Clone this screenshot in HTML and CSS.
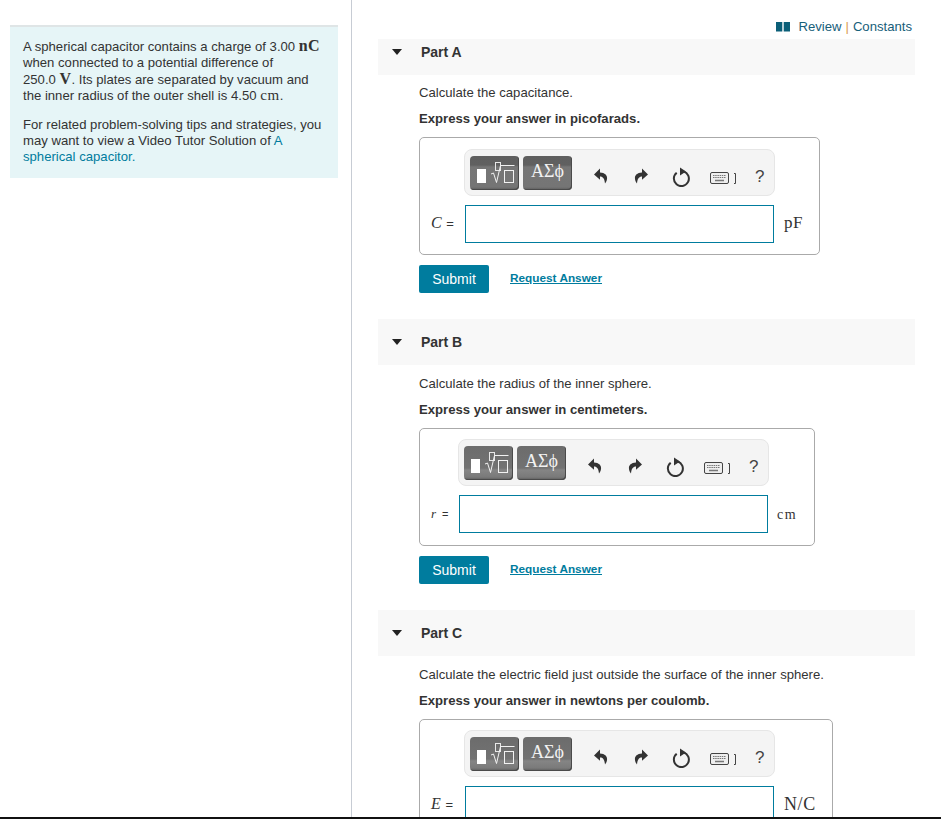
FILE: index.html
```
<!DOCTYPE html>
<html lang="en">
<head>
<meta charset="utf-8">
<title>Spherical capacitor</title>
<link rel="stylesheet" href="styles.css">
</head>
<body>
<svg class="sprites" width="0" height="0" aria-hidden="true">
  <symbol id="i-template" viewBox="0 0 49 34">
    <rect x="7" y="13" width="9" height="14" fill="#fff"/>
    <rect x="25.500" y="6.500" width="5" height="8" fill="none" stroke="#e8e8e8" stroke-width="1"/>
    <path d="M21 18l2.500-1 3 9.500 4-17h14" fill="none" stroke="#f2f2f2" stroke-width="1"/>
    <rect x="34.500" y="14.500" width="9" height="12" fill="none" stroke="#f2f2f2" stroke-width="1"/>
  </symbol>
  <symbol id="i-undo" viewBox="0 0 14 16">
    <path d="M6 .5L0 6.500l6 5.200V8.500c3 0 4.500 2 5 7 3.500-4.500 3-10.500-5-11z" fill="#333"/>
  </symbol>
  <symbol id="i-redo" viewBox="0 0 14 16">
    <path d="M8 .5l6 6-6 5.200V8.500c-3 0-4.500 2-5 7-3.500-4.500-3-10.500 5-11z" fill="#333"/>
  </symbol>
  <symbol id="i-reset" viewBox="0 0 18 20">
    <path d="M11.500 4.400a7.500 7.500 0 1 1-6.800 1.300" fill="none" stroke="#333" stroke-width="2"/>
    <path d="M8 .5l6 4-6 4z" fill="#333"/>
  </symbol>
  <symbol id="i-keys" viewBox="0 0 28 13">
    <rect x=".5" y=".5" width="18" height="11" rx="1.500" fill="#eee" stroke="#444"/>
    <path d="M3 3.500h13M3 5.500h13" stroke="#777" stroke-width="1" stroke-dasharray="1.500 .7"/>
    <path d="M5 8.500h9" stroke="#777" stroke-width="1.500"/>
    <path d="M24 1.500h1.500v10H24" fill="none" stroke="#444"/>
  </symbol>
</svg>

<main class="layout">
  <aside class="side">
    <div class="intro">
      <p>A spherical capacitor contains a charge of 3.00 <span class="math">nC</span> when connected to a potential difference of <span class="nowrap">250.0 <span class="math">V</span>.</span> Its plates are separated by vacuum and the inner radius of the outer shell is 4.50 <span class="math-sm">cm</span>.</p>
      <p>For related problem-solving tips and strategies, you may want to view a Video Tutor Solution of <a href="#">A spherical capacitor.</a></p>
    </div>
  </aside>

  <section class="content">
    <nav class="top-links">
      <svg class="book" width="14" height="10" viewBox="0 0 14 10" aria-hidden="true"><path d="M0 0h6.300v9.500H0zM7.700 0H14v9.500H7.700z" fill="#0b5f78"/></svg>
      <a href="#">Review</a><span class="sep">|</span><a href="#">Constants</a>
    </nav>

    <article class="part part-a">
      <header class="part-head"><span class="caret"></span><h2>Part A</h2></header>
      <div class="part-body">
        <p class="q">Calculate the capacitance.</p>
        <p class="q strong">Express your answer in picofarads.</p>
        <div class="answer">
          <div class="toolbar">
            <span class="tbtn"><svg width="49" height="34"><use href="#i-template"/></svg></span>
            <span class="tbtn greek">ΑΣϕ</span>
            <span class="tools">
              <svg class="t-undo" width="14" height="16"><use href="#i-undo"/></svg>
              <svg class="t-redo" width="14" height="16"><use href="#i-redo"/></svg>
              <svg class="t-reset" width="18" height="20"><use href="#i-reset"/></svg>
              <svg class="t-keys" width="28" height="13"><use href="#i-keys"/></svg>
              <span class="help">?</span>
            </span>
          </div>
          <label class="var"><i>C</i> =</label>
          <span class="field"></span>
          <span class="unit">pF</span>
        </div>
        <div class="actions"><button class="submit">Submit</button><a class="req" href="#">Request Answer</a></div>
      </div>
    </article>

    <article class="part">
      <header class="part-head"><span class="caret"></span><h2>Part B</h2></header>
      <div class="part-body">
        <p class="q">Calculate the radius of the inner sphere.</p>
        <p class="q strong">Express your answer in centimeters.</p>
        <div class="answer">
          <div class="toolbar">
            <span class="tbtn low"><svg width="49" height="34"><use href="#i-template"/></svg></span>
            <span class="tbtn low greek">ΑΣϕ</span>
            <span class="tools">
              <svg class="t-undo" width="14" height="16"><use href="#i-undo"/></svg>
              <svg class="t-redo" width="14" height="16"><use href="#i-redo"/></svg>
              <svg class="t-reset" width="18" height="20"><use href="#i-reset"/></svg>
              <svg class="t-keys" width="28" height="13"><use href="#i-keys"/></svg>
              <span class="help">?</span>
            </span>
          </div>
          <label class="var small"><i>r</i> =</label>
          <span class="field"></span>
          <span class="unit small">cm</span>
        </div>
        <div class="actions"><button class="submit">Submit</button><a class="req" href="#">Request Answer</a></div>
      </div>
    </article>

    <article class="part">
      <header class="part-head"><span class="caret"></span><h2>Part C</h2></header>
      <div class="part-body">
        <p class="q">Calculate the electric field just outside the surface of the inner sphere.</p>
        <p class="q strong">Express your answer in newtons per coulomb.</p>
        <div class="answer">
          <div class="toolbar">
            <span class="tbtn low"><svg width="49" height="34"><use href="#i-template"/></svg></span>
            <span class="tbtn low greek">ΑΣϕ</span>
            <span class="tools">
              <svg class="t-undo" width="14" height="16"><use href="#i-undo"/></svg>
              <svg class="t-redo" width="14" height="16"><use href="#i-redo"/></svg>
              <svg class="t-reset" width="18" height="20"><use href="#i-reset"/></svg>
              <svg class="t-keys" width="28" height="13"><use href="#i-keys"/></svg>
              <span class="help">?</span>
            </span>
          </div>
          <label class="var"><i>E</i> =</label>
          <span class="field"></span>
          <span class="unit wide">N/C</span>
        </div>
      </div>
    </article>
  </section>
</main>
<div class="window-edge"></div>
</body>
</html>
```

FILE: styles.css
```
* { box-sizing: border-box; }
html, body { margin: 0; height: 100%; overflow: hidden; background: #fff; }
body { font-family: "Liberation Sans", Arial, sans-serif; font-size: 13.140px; color: #333; }
.sprites { position: absolute; }
a { color: #007c9e; text-decoration: none; }

.layout { display: flex; align-items: stretch; height: 819px; overflow: hidden; }
.side { width: 352px; flex: none; padding: 25px 13px 0 10px; border-right: 1px solid #c7ccd4; }
.intro { background: #e6f5f7; border-top: 2px solid #dfe5e6; padding: 11px 15px 13px 13px; line-height: 16px; }
.intro p { margin: 0 0 13px; }
.intro p:last-child { margin: 0; }
.math { font-family: "Liberation Serif", serif; font-size: 16px; font-weight: 700; line-height: 1; color: #333; letter-spacing: .4px; }
.math-sm { font-family: "Liberation Serif", serif; font-size: 15px; line-height: 1; letter-spacing: .6px; }
.nowrap { white-space: nowrap; }

.content { flex: 1; min-width: 0; padding: 0 26px; }
.top-links { display: flex; justify-content: flex-end; align-items: center; height: 39px; padding: 14px 3px 0 0; line-height: 16px; }
.top-links a { color: #17607a; }
.book { margin-right: 8px; }
.sep { margin: 0 4px; color: #d99a4e; }

.part-head { display: flex; align-items: center; height: 46px; background: #f8f8f8; padding-left: 14px; }
.part-a .part-head { height: 36px; padding-bottom: 10px; }
.caret { width: 0; height: 0; border-left: 5.500px solid transparent; border-right: 5.500px solid transparent; border-top: 6px solid #222; margin-right: 19px; }
h2 { margin: 0; font-size: 14px; line-height: 16px; font-weight: 700; color: #333; }
.part-body { padding: 11px 0 26px 41px; }
.part-a .part-body { padding-top: 10px; }
.q { margin: 0 0 10px; line-height: 16px; }
.q.strong { font-weight: 700; }

.answer { display: inline-grid; grid-template-columns: auto 309px auto; column-gap: 10px; row-gap: 9px; align-items: center; border: 1px solid #aaa; border-radius: 5px; padding: 10px 16px 12px 11px; }
.part-a .answer { padding-top: 11px; padding-bottom: 11px; }
.toolbar { grid-column: 2; grid-row: 1; display: flex; align-items: center; width: 311px; height: 47px; margin-left: -1px; background: #f4f4f4; border: 1px solid #e6e6e6; border-radius: 8px; padding: 0 5px; }
.tbtn { display: flex; align-items: center; justify-content: center; flex: none; width: 49px; height: 34px; margin-right: 4px; border-radius: 4px; box-shadow: inset -1px -1px 0 #4a4a4a; background: linear-gradient(#5f5f5f 0, #606060 9px, #767676 11px, #757575 31px, #5a5a5a 34px); }
.tbtn.low { background: linear-gradient(#6c6c6c 0, #727272 22px, #858585 24px, #7a7a7a 31px, #5a5a5a 34px); }
.tbtn svg { display: block; }
.greek { font-family: "Liberation Serif", serif; font-size: 18px; color: #f2f2f2; padding-bottom: 3px; }
.tools { flex: 1; display: block; position: relative; height: 100%; }
.tools svg, .help { position: absolute; }
.t-undo { left: 18px; top: 18px; }
.t-redo { left: 58px; top: 18px; }
.t-reset { left: 96px; top: 17px; }
.t-keys { left: 134px; top: 22px; }
.help { left: 179px; top: 18px; font-size: 17px; line-height: 18px; color: #444; }

.var { grid-column: 1; grid-row: 2; min-width: 24px; padding-bottom: 2px; font-size: 13px; color: #333; }
.var i { font-family: "Liberation Serif", serif; font-size: 16px; margin-right: 1px; }
.var.small { min-width: 18px; padding-bottom: 0; font-size: 11px; letter-spacing: .5px; }
.var.small i { font-size: 13px; margin-right: 2px; }
.field { grid-column: 2; grid-row: 2; height: 38px; background: #fff; border: 1px solid #007c9e; }
.unit { grid-column: 3; grid-row: 2; padding-bottom: 2px; font-family: "Liberation Serif", serif; font-size: 17px; letter-spacing: .6px; color: #333; }
.unit.wide { font-size: 18px; }
.unit.small { padding: 1px 0 0; font-size: 14px; letter-spacing: 1.500px; margin: 0 1px 0 -1px; }

.actions { display: flex; align-items: center; margin-top: 10px; }
.submit { width: 70px; height: 28px; background: #007c9e; color: #fff; border: 0; border-radius: 2px; font: 14px "Liberation Sans", Arial, sans-serif; padding: 0; }
.req { margin-left: 21px; padding-bottom: 2px; font-size: 11.800px; font-weight: 700; text-decoration: underline; color: #007c9e; }

.window-edge { position: fixed; left: 0; right: 0; bottom: 0; height: 2px; background: #111; }
```
